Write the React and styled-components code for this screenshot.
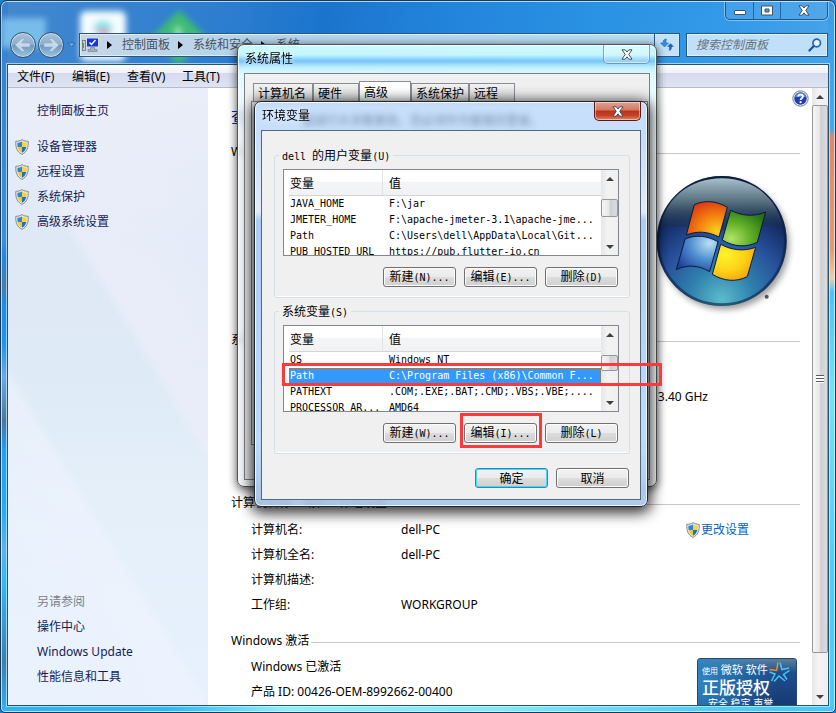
import React from "react";
import styled, { createGlobalStyle, css } from "styled-components";

const Global = createGlobalStyle`
  *, *::before, *::after { box-sizing: border-box; }
  html, body { margin: 0; }
  body {
    font: 12px/18px "Noto Sans", "Noto Sans CJK SC", sans-serif;
    color: #000;
    background: #1d7fd6;
  }
  button, input { font: inherit; color: inherit; }
  h1, h2, ul, dl, dd, dt { margin: 0; padding: 0; font: inherit; list-style: none; }
`;

/* ---------- main window ---------- */

const Desktop = styled.div`
  position: relative;
  height: 100vh;
  overflow: hidden;
`;

const Window = styled.div`
  position: relative;
  display: flex;
  flex-direction: column;
  height: 100%;
  padding: 0 7px 7px;
  border: 1px solid #16395c;
  border-radius: 7px 7px 5px 5px;
  box-shadow: inset 0 0 0 1px rgba(225, 245, 255, 0.75);
  overflow: hidden;
  background:
    linear-gradient(90deg, #2fb2f8, #2db8fb 20%, #8af0fc 34%, #7ee9fb 60%, #50cdfb 85%, #46c8fa) bottom / 100% 7px no-repeat,
    linear-gradient(180deg, #3b9de6 0, #4aa6ea 18%, #e0866c 19%, #e39a78 35%, #f0cfa0 39%, #4cc4fb 41%, #6fe4fb 55%, #50cdfb 80%, #4ccbfa) right / 7px 100% no-repeat,
    linear-gradient(180deg, #3b7fcb 0, #3a8edb 34%, #1f86e6 36%, #4a7da8 40%, #1b8df0 43%, #1b94f2 48%, #6fa8e6 53%, #4a7898 59%, #1e9ff8 63%, #22aefb 72%, #5ab4f0 77%, #2fb8fb 82%, #3f7fa8 93%, #2fb2f8) left / 7px 100% no-repeat,
    linear-gradient(100deg, #4388cd 0, #2f7fd0 22%, #1b74cc 34%, #2283db 46%, #2a92e2 62%, #3399e8 76%, #46a4e8 88%, #58aee9 100%);
`;

const Wallpaper = styled.svg`
  position: absolute;
  left: 0;
  top: 0;
  filter: blur(3px);
`;

const CaptionBar = styled.header`
  position: relative;
  display: flex;
  justify-content: flex-end;
  height: 32px;
  padding-top: 1px;
`;

const CaptionGroup = styled.div`
  display: flex;
  height: 18px;
  border: 1px solid rgba(16, 62, 110, 0.75);
  border-top: 0;
  border-radius: 0 0 5px 5px;
  box-shadow: 0 0 0 1px rgba(190, 225, 255, 0.55);
  background: rgba(110, 180, 240, 0.3);
`;

const CaptionButton = styled.button`
  display: grid;
  place-items: center;
  width: ${(p) => (p.$wide ? 47 : 27)}px;
  padding: 0;
  border: 0;
  border-left: ${(p) => (p.$first ? 0 : "1px solid rgba(16, 62, 110, 0.6)")};
  background: none;
`;

const AddressRow = styled.div`
  position: relative;
  display: flex;
  align-items: center;
  height: 24px;
  margin-bottom: 7px;
`;

const NavButtons = styled.nav`
  display: flex;
  align-items: center;
  gap: 2px;
  flex: none;
  padding-left: 2px;
  width: 71px;
`;

const RoundButton = styled.button`
  display: grid;
  place-items: center;
  flex: none;
  width: 26px;
  height: 26px;
  padding: 0;
  border: 1px solid #2d5278;
  border-radius: 50%;
  box-shadow: inset 0 0 0 1px rgba(255, 255, 255, 0.55);
  background: linear-gradient(#a9c2d8 0, #8eaecb 48%, #6d98bf 52%, #9dc4de 100%);
`;

const HistoryButton = styled.button`
  padding: 0 0 0 1px;
  border: 0;
  background: none;
  line-height: 0;
`;

const AddressBox = styled.div`
  display: flex;
  align-items: center;
  flex: 1;
  height: 24px;
  border: 1px solid #2b567f;
  box-shadow: inset 0 0 0 1px rgba(235, 248, 255, 0.7);
  background: linear-gradient(90deg, #c5d7e8, #b5d3ea 30%, #b8def3);
`;

const Crumbs = styled.ol`
  display: flex;
  align-items: center;
  flex: 1;
  margin: 0;
  padding: 0 2px;
  list-style: none;
  color: #46525e;
`;

const Crumb = styled.li`
  display: flex;
  align-items: center;
  &::before {
    content: "";
    margin: 0 10px 0 8px;
    border: 4px solid transparent;
    border-left: 5px solid #000;
    border-right: 0;
  }
`;

const CrumbLink = styled.a`
  color: inherit;
  text-decoration: none;
`;

const RefreshButton = styled.button`
  display: grid;
  place-items: center;
  width: 25px;
  height: 22px;
  padding: 0;
  border: 0;
  border-left: 1px solid #2b567f;
  background: rgba(200, 228, 250, 0.6);
`;

const SearchBox = styled.label`
  display: flex;
  align-items: center;
  width: 142px;
  height: 24px;
  margin-left: 6px;
  padding: 0 5px 0 9px;
  border: 1px solid #2b567f;
  box-shadow: inset 0 0 0 1px rgba(235, 248, 255, 0.7);
  background: #bfe0f8;
`;

const SearchInput = styled.input`
  flex: 1;
  min-width: 0;
  padding: 0;
  border: 0;
  outline: 0;
  background: none;
  font-style: italic;
  &::placeholder { color: #66727c; opacity: 1; }
`;

const Client = styled.div`
  position: relative;
  display: flex;
  flex-direction: column;
  flex: 1;
  min-height: 0;
  margin: 0 -1px -1px;
  border: 1px solid #27536f;
  box-shadow: 0 0 0 1px rgba(215, 243, 255, 0.65);
  background: #fff;
`;

const MenuBar = styled.nav`
  display: flex;
  align-items: center;
  height: 23px;
  padding: 2px 0 0 9px;
  border-bottom: 1px solid #b4bcd0;
  background: linear-gradient(#fdfdff 0, #eff2fa 35%, #d5dbee 38%, #dfe4f2 100%);
`;

const MenuItem = styled.button`
  width: 55px;
  padding: 0;
  border: 0;
  background: none;
  text-align: left;
  white-space: nowrap;
`;

const Columns = styled.div`
  display: flex;
  flex: 1;
  min-height: 0;
`;

const Sidebar = styled.aside`
  display: flex;
  flex-direction: column;
  flex: none;
  width: 200px;
  padding: 10px 0 16px 7px;
  background:
    linear-gradient(59deg, rgba(240, 244, 254, 0.2) 0, rgba(240, 244, 254, 0.55) 34%, transparent 36%, transparent 60%, rgba(236, 238, 250, 0.7) 62%, rgba(236, 238, 250, 0.2) 100%),
    linear-gradient(180deg, #e9eff8 0, #dfe9f6 24%, #deeaf5 45%, #e5f0fb 72%, #e7f1fd 100%);
`;

const SideLink = styled.a`
  display: flex;
  align-items: center;
  height: 25px;
  padding-left: ${(p) => (p.$icon ? 0 : 22)}px;
  gap: 8px;
  color: #151c55;
  text-decoration: none;
`;

const TaskList = styled.div`
  margin-top: 11px;
`;

const SeeAlso = styled.div`
  margin-top: auto;
`;

const SeeAlsoTitle = styled.div`
  height: 25px;
  padding-left: 22px;
  line-height: 25px;
  color: #7b8087;
`;

const Main = styled.main`
  position: relative;
  flex: 1;
  min-width: 0;
  padding: 17px 12px 0 23px;
  overflow: hidden;
  line-height: 25px;
`;

const PageTitle = styled.h1`
  height: 25px;
  margin-bottom: 9px;
  font-size: 16px;
  color: #003399;
`;

const HelpButton = styled.button`
  position: absolute;
  top: 2px;
  right: 3px;
  padding: 0;
  border: 0;
  background: none;
  line-height: 0;
`;

const SectionTitle = styled.h2`
  display: flex;
  align-items: center;
  gap: 2px;
  height: 25px;
  white-space: nowrap;
  &::after {
    content: "";
    flex: 1;
    height: 1px;
    margin-top: 4px;
    background: #c6c6c6;
  }
`;

const EditionBlock = styled.div`
  display: flex;
  justify-content: flex-end;
  height: 163px;
  padding: 11px 13px 0 0;
`;

const SystemBlock = styled.dl`
  height: 138px;
  padding: 32px 0 0 20px;
`;

const NameBlock = styled.dl`
  padding: 2px 0 11px 20px;
`;

const Fact = styled.div`
  display: flex;
  height: 25px;
`;

const FactLabel = styled.dt`
  width: 150px;
`;

const FactValue = styled.dd`
  width: ${(p) => (p.$wide ? "307px" : "auto")};
  text-align: ${(p) => (p.$wide ? "right" : "left")};
`;

const ChangeLink = styled.a`
  display: flex;
  align-items: center;
  gap: 1px;
  margin: 0 51px 0 auto;
  color: #0066cc;
  text-decoration: none;
`;

const Activation = styled.div`
  display: flex;
  justify-content: space-between;
  padding: 1px 3px 0 20px;
`;

const Genuine = styled.div`
  display: grid;
  grid-template-columns: 1fr 26px;
  grid-template-rows: 18px 17px 14px;
  flex: none;
  width: 100px;
  height: 56px;
  margin-top: 4px;
  padding: 2px 3px 0 4px;
  border: 1px solid #27496e;
  border-radius: 3px 3px 0 0;
  color: #fff;
  font-size: 11px;
  line-height: 18px;
  white-space: nowrap;
  background:
    radial-gradient(circle at 0 40%, #2f86c4 0, rgba(30, 90, 160, 0) 75%),
    linear-gradient(180deg, #5c7f9f 0, #1d4f8c 25%, #14366f 100%);
`;

const GenuineSmall = styled.small`
  font-size: 8px;
`;

const GenuineBig = styled.strong`
  grid-column: 1 / 3;
  font-size: 17px;
  font-weight: 500;
  line-height: 17px;
`;

const GenuineFoot = styled.span`
  grid-column: 1 / 3;
  padding-left: 6px;
  font-size: 10px;
  line-height: 14px;
`;

/* ---------- scrollbar ---------- */

const Bar = styled.div`
  display: flex;
  flex-direction: column;
  flex: none;
  width: ${(p) => p.$width}px;
  background: linear-gradient(90deg, #e6e6e6, #f3f3f3 40%, #efefef);
`;

const BarButton = styled.button`
  display: grid;
  place-items: center;
  height: 17px;
  padding: 0;
  border: 0;
  background: none;
  &::before {
    content: "";
    border: 4px solid transparent;
    ${(p) =>
      p.$down
        ? css`border-top-color: #404040; border-bottom: 0;`
        : css`border-bottom-color: #404040; border-top: 0;`}
  }
`;

const BarSpace = styled.div`
  flex: ${(p) => p.$grow};
`;

const BarThumb = styled.div`
  display: grid;
  place-items: center;
  flex: ${(p) => p.$grow};
  border: 1px solid #979797;
  border-radius: 2px;
  background: linear-gradient(90deg, #f6f6f6, #e8e8ea 45%, #cfd0d4 55%, #dcdce0);
`;

const Grip = styled.div`
  width: 8px;
  height: 8px;
  background: repeating-linear-gradient(#5b5b5b 0 1px, #fff 1px 3px);
`;

function ScrollBar({ width, before, thumb, after, grip }) {
  return (
    <Bar $width={width}>
      <BarButton aria-label="向上滚动" />
      <BarSpace $grow={before} />
      <BarThumb $grow={thumb}>{grip && <Grip />}</BarThumb>
      <BarSpace $grow={after} />
      <BarButton $down aria-label="向下滚动" />
    </Bar>
  );
}

/* ---------- dialogs ---------- */

const DialogFrame = styled.section`
  position: absolute;
  display: flex;
  flex-direction: column;
  padding: 0 6px 6px;
  border-radius: 7px;
  font-family: "Noto Sans CJK SC", sans-serif;
`;

const PropertiesDialog = styled(DialogFrame)`
  left: 237px;
  top: 44px;
  width: 420px;
  height: 443px;
  border: 1px solid #4c5457;
  box-shadow: inset 0 0 0 1px rgba(255, 255, 255, 0.8), 0 2px 9px 1px rgba(0, 0, 0, 0.6);
  backdrop-filter: blur(4px);
  background: linear-gradient(180deg, rgba(205, 252, 250, 0.94) 0, rgba(200, 250, 255, 0.92) 10px, rgba(120, 200, 255, 0.9) 16px, rgba(190, 240, 255, 0.9) 22px, rgba(225, 253, 255, 0.88) 30px, rgba(242, 250, 255, 0.82) 80px, rgba(246, 249, 252, 0.82) 100%);
`;

const VariablesDialog = styled(DialogFrame)`
  left: 254px;
  top: 101px;
  width: 394px;
  border: 1px solid #1d2530;
  box-shadow: inset 0 0 0 1px rgba(255, 255, 255, 0.8), 0 3px 14px 3px rgba(0, 0, 0, 0.8);
  backdrop-filter: blur(3px);
  background: linear-gradient(180deg, rgba(170, 206, 250, 0.66) 0, rgba(170, 206, 250, 0.66) 40px, rgba(220, 234, 250, 0.9) 110px, rgba(165, 200, 240, 0.92) 118px, rgba(180, 217, 252, 0.92) 340px, rgba(165, 195, 230, 0.9) 100%);
`;

const DialogTitle = styled.div`
  display: flex;
  justify-content: space-between;
  flex: none;
  height: 28px;
  padding-left: 1px;
  line-height: 26px;
  text-shadow: 0 0 6px #fff;
`;

const CloseButton = styled.button`
  display: grid;
  place-items: center;
  width: 47px;
  height: 19px;
  padding: 0;
  border: 1px solid ${(p) => (p.$active ? "#5a1a14" : "rgba(70, 110, 130, 0.6)")};
  border-top: 0;
  border-radius: 0 0 5px 5px;
  box-shadow: inset 0 0 0 1px rgba(255, 255, 255, 0.45);
  background: ${(p) =>
    p.$active
      ? "linear-gradient(#e0a293 0, #d3765f 45%, #bb3119 50%, #c4422a 75%, #dd8c62 100%)"
      : "rgba(255, 255, 255, 0.2)"};
`;

const DialogBody = styled.div`
  flex: 1;
  min-height: 0;
  border: 1px solid ${(p) => (p.$active ? "#55667f" : "#7b8084")};
  background: #f0f0f0;
`;

const PropertiesBody = styled(DialogBody)`
  display: flex;
  flex-direction: column;
  padding: 7px 1px 34px 6px;
`;

const Tabs = styled.div`
  display: flex;
  align-items: flex-end;
  height: 20px;
  padding-left: 2px;
`;

const Tab = styled.button`
  width: ${(p) => p.$width}px;
  height: ${(p) => (p.$selected ? 20 : 18)}px;
  padding: 0 0 0 4px;
  border: 1px solid #898c95;
  border-bottom: 0;
  background: ${(p) => (p.$selected ? "#fff" : "linear-gradient(#f2f2f2, #dddddd)")};
  text-align: left;
  line-height: 15px;
  white-space: nowrap;
`;

const TabPage = styled.div`
  flex: 1;
  padding: 9px 50px;
  border: 1px solid #898c95;
  background: #fff;
`;

const VariablesBody = styled(DialogBody)`
  display: flex;
  flex-direction: column;
  gap: 4px;
  padding: 15px 10px 11px 12px;
`;

const Mono = styled.span`
  font-family: "DejaVu Sans Mono", monospace;
  font-size: 10px;
`;

const Group = styled.fieldset`
  min-width: 0;
  margin: 0;
  padding: 5px 10px 10px 4px;
  border: 1px solid #d5dfe5;
  border-radius: 3px;
  box-shadow: inset 0 -1px 0 #fff;
`;

const Legend = styled.legend`
  height: 18px;
  padding: 0 3px;
  line-height: 17px;
`;

const ListView = styled.div`
  display: flex;
  height: 87px;
  margin-left: 4px;
  border: 1px solid #828790;
  background: #fff;
`;

const ListPort = styled.div`
  flex: 1;
  min-width: 0;
  padding-left: 5px;
  overflow: hidden;
`;

const Table = styled.table`
  width: 100%;
  table-layout: fixed;
  border-collapse: collapse;
`;

const HeadCell = styled.th`
  width: ${(p) => p.$width};
  height: 25px;
  padding: 1px 0 0 1px;
  border-bottom: 1px solid #d5d5d5;
  font-weight: 400;
  line-height: 21px;
  text-align: left;
  background:
    linear-gradient(#e0e3e8, #e0e3e8) right 5px top / ${(p) => (p.$width ? 1 : 0)}px 100% no-repeat,
    linear-gradient(#fff 0, #fff 45%, #f4f5f7 50%, #f1f2f4 100%);
`;

const Row = styled.tr`
  ${(p) =>
    p.$selected &&
    css`
      color: #fff;
      background: #3399ff;
      outline: 1px dotted #c86b16;
      outline-offset: -1px;
    `}
`;

const Cell = styled.td`
  height: 16px;
  padding: 0 0 0 1px;
  font: 10px/16px "DejaVu Sans Mono", monospace;
  white-space: nowrap;
  overflow: hidden;
`;

const Actions = styled.div`
  display: flex;
  justify-content: flex-end;
  gap: 8px;
  margin: ${(p) => p.$top}px 1px 0 0;
`;

const PushButton = styled.button`
  width: 73px;
  height: 20px;
  padding: 0;
  border: 1px solid ${(p) => (p.$default ? "#2c8ab5" : "#707070")};
  border-radius: 3px;
  box-shadow: ${(p) => (p.$default ? "inset 0 0 0 1px #48d4fb" : "inset 0 0 0 1px #fcfcfc")};
  background: linear-gradient(#f2f2f2 0, #ebebeb 48%, #dddddd 50%, #cfcfcf 100%);
  line-height: 16px;
  white-space: nowrap;
`;

const Mark = styled.div`
  position: absolute;
  left: ${(p) => p.$x}px;
  top: ${(p) => p.$y}px;
  width: ${(p) => p.$w}px;
  height: ${(p) => p.$h}px;
  border: 3px solid #fb3a3a;
  pointer-events: none;
`;

/* ---------- icons ---------- */

const Shield = () => (
  <svg width="14" height="16" viewBox="0 0 14 16" aria-hidden="true">
    <path d="M7 .6C5.200 1.900 3 2.300.8 2.300.4 8.500 2 13 7 15.400 12 13 13.600 8.500 13.200 2.300 11 2.300 8.800 1.900 7 .6Z" fill="#e4e6e8" stroke="#858b92" />
    <path d="M7 2.400C5.600 3.300 4.100 3.700 2.400 3.800c0 1.500 0 2.900.3 4.200H7Z" fill="#2a86d8" />
    <path d="M7 2.400c1.400.9 2.900 1.300 4.600 1.400 0 1.500 0 2.900-.3 4.200H7Z" fill="#fbd431" />
    <path d="M7 8H2.700c.6 2.600 1.900 4.500 4.300 5.800Z" fill="#f9c81e" />
    <path d="M7 8h4.300c-.6 2.600-1.900 4.500-4.300 5.800Z" fill="#1c6fca" />
  </svg>
);

const CrossGlyph = () => (
  <svg width="12" height="11" viewBox="0 0 12 11" aria-hidden="true">
    <path d="M1 .8h3.200L6 3 7.800.8H11L7.800 5.400 11 10.200H7.800L6 7.800 4.200 10.200H1L4.200 5.400Z" fill="#fff" stroke="#45505d" strokeLinejoin="round" />
  </svg>
);

const MinGlyph = () => (
  <svg width="12" height="11" viewBox="0 0 12 11" aria-hidden="true">
    <rect x=".5" y="5.500" width="11" height="4" rx=".5" fill="#fff" stroke="#45505d" />
  </svg>
);

const MaxGlyph = () => (
  <svg width="12" height="11" viewBox="0 0 12 11" aria-hidden="true">
    <path fillRule="evenodd" d="M.5 1h11v9H.5Zm3.500 3v3h4V4Z" fill="#fff" stroke="#45505d" />
  </svg>
);

const Arrow = ({ back }) => (
  <svg width="18" height="16" viewBox="0 0 18 16" aria-hidden="true">
    <path
      d={back ? "M1 8 8 1.500h3L7.500 6H16v4H7.500L11 14.500H8Z" : "M17 8 10 1.500H7L10.500 6H2v4h8.500L7 14.500h3Z"}
      fill="#d4e3f0"
      fillOpacity=".85"
      stroke="#8aa9c6"
      strokeWidth=".6"
    />
  </svg>
);

const Monitor = () => (
  <svg width="17" height="16" viewBox="0 0 17 16" aria-hidden="true">
    <rect x=".5" y="3.500" width="3" height="10" fill="#c8cec8" stroke="#6c746c" strokeWidth=".8" />
    <path d="M1.500 6v5" stroke="#33b533" />
    <rect x="4.500" y="1" width="12" height="9" fill="#1735d8" stroke="#d8dce4" />
    <path d="m7.500 5.500 2 2L13.500 3" fill="none" stroke="#fff" strokeWidth="1.500" />
    <path d="M8.500 10.500h4v2h2.500v2H6v-2h2.500Z" fill="#a9aeb6" stroke="#737a84" strokeWidth=".6" />
  </svg>
);

const RefreshGlyph = () => (
  <svg width="15" height="14" viewBox="0 0 15 14" aria-hidden="true">
    <path d="M6.500 1C4 1 3 2.500 3 5H.5l4 4 4-4H6c0-1.500 0-2.500.5-4Z" fill="#2f8fe0" stroke="#1b62b4" strokeWidth=".5" />
    <path d="M8.500 13C11 13 12 11.500 12 9h2.500l-4-4-4 4H9c0 1.500 0 2.500-.5 4Z" fill="#2360b8" stroke="#e8f4ff" strokeWidth=".4" />
  </svg>
);

const Magnifier = () => (
  <svg width="14" height="14" viewBox="0 0 14 14" aria-hidden="true">
    <circle cx="8.700" cy="5" r="3.800" fill="#e4f4ff" stroke="#2766b6" strokeWidth="1.700" />
    <path d="M5.800 8 1.500 12.500" stroke="#2456a2" strokeWidth="2.400" strokeLinecap="round" />
  </svg>
);

const HelpGlyph = () => (
  <svg width="17" height="17" viewBox="0 0 17 17" aria-hidden="true">
    <circle cx="8.500" cy="8.500" r="7.700" fill="#eceef0" stroke="#777d84" />
    <circle cx="8.500" cy="8.500" r="6.200" fill="#1f3fb4" />
    <path d="M3 7a5.700 5.700 0 0 1 11 0Z" fill="#5e86dc" />
    <path d="M6.200 6.600C6.200 3.800 11 3.900 10.900 6.500 10.900 8.200 8.600 8.300 8.600 10" fill="none" stroke="#fff" strokeWidth="1.800" />
    <circle cx="8.600" cy="12.200" r="1.100" fill="#fff" />
  </svg>
);

const StarGlyph = () => (
  <svg width="24" height="22" viewBox="0 0 24 22" aria-hidden="true">
    <g fill="none" strokeWidth="1.500">
      <path d="M1.500 8.500 8.500 9.500 10 1.500" stroke="#f08a24" />
      <path d="M12 1.500 14 8.500 21 7M1.500 11 7 13 3.500 20M6 20.500 11 15l6 5M21.500 9.500 15.500 13.500 19 18.500" stroke="#4bc3f2" />
    </g>
  </svg>
);

const WindowsOrb = () => (
  <svg width="131" height="132" viewBox="48 44 393 396" overflow="visible" aria-label="Windows">
    <defs>
      <radialGradient id="orb" cx=".5" cy=".95" r=".9">
        <stop offset="0" stopColor="#5bbccb" />
        <stop offset=".28" stopColor="#2f7fae" />
        <stop offset=".55" stopColor="#27509a" />
        <stop offset=".8" stopColor="#132a62" />
        <stop offset="1" stopColor="#0a1c42" />
      </radialGradient>
      <linearGradient id="gloss" x1="0" y1="0" x2="0" y2="1">
        <stop offset="0" stopColor="#a7bfc9" />
        <stop offset=".5" stopColor="#4c6676" />
        <stop offset="1" stopColor="#10233f" stopOpacity=".3" />
      </linearGradient>
      <radialGradient id="fr" cx=".75" cy=".85" r=".9">
        <stop offset="0" stopColor="#f9d21c" />
        <stop offset=".45" stopColor="#f58a12" />
        <stop offset="1" stopColor="#dc3b10" />
      </radialGradient>
      <radialGradient id="fg" cx=".2" cy=".8" r=".95">
        <stop offset="0" stopColor="#b2e468" />
        <stop offset=".5" stopColor="#5fae25" />
        <stop offset="1" stopColor="#256d18" />
      </radialGradient>
      <radialGradient id="fb" cx=".8" cy=".2" r=".95">
        <stop offset="0" stopColor="#b9e2f2" />
        <stop offset=".5" stopColor="#4f8fd0" />
        <stop offset="1" stopColor="#1e3f9a" />
      </radialGradient>
      <radialGradient id="fy" cx=".3" cy=".3" r=".9">
        <stop offset="0" stopColor="#fdf32a" />
        <stop offset=".5" stopColor="#fbd315" />
        <stop offset="1" stopColor="#ee8f10" />
      </radialGradient>
      <filter id="soft" x="-20%" y="-20%" width="140%" height="140%">
        <feGaussianBlur stdDeviation="9" />
      </filter>
    </defs>
    <circle cx="254" cy="254" r="194" fill="#000" opacity=".38" filter="url(#soft)" />
    <circle cx="245" cy="242" r="195" fill="url(#orb)" />
    <circle cx="245" cy="242" r="191" fill="none" stroke="#0b1e40" strokeWidth="8" opacity=".6" />
    <path d="M61 204C75 112 152 54 245 54s170 58 184 150c-50-22-90 6-180 6S110 188 61 204Z" fill="url(#gloss)" />
    <g stroke="#0a1a3a" strokeWidth="3">
      <path d="M163 133c32-14 66-12 99 8l-25 89c-33-17-66-19-98-6Z" fill="url(#fr)" />
      <path d="M272 150c34 17 68 20 105 5l-25 91c-34 16-70 14-105-7Z" fill="url(#fg)" />
      <path d="M135 236c32-14 66-10 99 8l-25 90c-34-20-66-22-100-6Z" fill="url(#fb)" />
      <path d="M242 252c34 18 68 22 105 9l-25 88c-34 17-70 14-105-7Z" fill="url(#fy)" />
    </g>
    <circle cx="380" cy="409" r="6" fill="#555" />
  </svg>
);

/* ---------- data ---------- */

const tasks = ["设备管理器", "远程设置", "系统保护", "高级系统设置"];
const seeAlso = ["操作中心", "Windows Update", "性能信息和工具"];
const names = [
  ["计算机名:", "dell-PC"],
  ["计算机全名:", "dell-PC"],
  ["计算机描述:", ""],
  ["工作组:", "WORKGROUP"],
];
const tabs = [
  ["计算机名", 60],
  ["硬件", 46],
  ["高级", 52],
  ["系统保护", 58],
  ["远程", 46],
];
const userVars = [
  ["JAVA_HOME", "F:\\jar"],
  ["JMETER_HOME", "F:\\apache-jmeter-3.1\\apache-jme..."],
  ["Path", "C:\\Users\\dell\\AppData\\Local\\Git..."],
  ["PUB_HOSTED_URL", "https://pub.flutter-io.cn"],
];
const systemVars = [
  ["OS", "Windows_NT"],
  ["Path", "C:\\Program Files (x86)\\Common F..."],
  ["PATHEXT", ".COM;.EXE;.BAT;.CMD;.VBS;.VBE;...."],
  ["PROCESSOR_AR...", "AMD64"],
];

function VariableGroup({ legend, rows, selected, scroll, keys }) {
  return (
    <Group>
      <Legend>{legend}</Legend>
      <ListView>
        <ListPort>
          <Table>
            <thead>
              <tr>
                <HeadCell $width="99px">变量</HeadCell>
                <HeadCell>值</HeadCell>
              </tr>
            </thead>
            <tbody>
              {rows.map(([name, value]) => (
                <Row key={name} $selected={name === selected}>
                  <Cell>{name}</Cell>
                  <Cell>{value}</Cell>
                </Row>
              ))}
            </tbody>
          </Table>
        </ListPort>
        <ScrollBar width={17} before={scroll[0]} thumb={scroll[1]} after={scroll[2]} />
      </ListView>
      <Actions $top={11}>
        <PushButton>新建<Mono>({keys[0]})...</Mono></PushButton>
        <PushButton>编辑<Mono>({keys[1]})...</Mono></PushButton>
        <PushButton>删除<Mono>({keys[2]})</Mono></PushButton>
      </Actions>
    </Group>
  );
}

export default function App() {
  return (
    <Desktop>
      <Global />
      <Window>
        <Wallpaper width="240" height="64" aria-hidden="true">
          <rect x="0" y="17" width="45" height="30" fill="#77bdea" />
          <rect x="79" y="10" width="46" height="50" rx="6" fill="#f4fcff" />
          <path d="M92 29c2-12 18-12 20 0Z" fill="#8fdcea" />
          <path d="M93 30h17l-6 5Z" fill="#e0627a" />
          <path d="M178 9 206 37 178 64 150 37Z" fill="#3fbb74" />
          <rect x="174" y="26" width="6" height="14" fill="#a5e8bb" />
        </Wallpaper>
        <CaptionBar>
          <CaptionGroup>
            <CaptionButton $first aria-label="最小化"><MinGlyph /></CaptionButton>
            <CaptionButton aria-label="最大化"><MaxGlyph /></CaptionButton>
            <CaptionButton $wide aria-label="关闭"><CrossGlyph /></CaptionButton>
          </CaptionGroup>
        </CaptionBar>
        <AddressRow>
          <NavButtons>
            <RoundButton aria-label="后退"><Arrow back /></RoundButton>
            <RoundButton aria-label="前进"><Arrow /></RoundButton>
            <HistoryButton aria-label="最近的页面">
              <svg width="9" height="6" aria-hidden="true"><path d="M1 1h7L4.500 5Z" fill="#6fb0ea" stroke="#1d5c9c" strokeWidth=".7" /></svg>
            </HistoryButton>
          </NavButtons>
          <AddressBox>
            <Crumbs>
              <Monitor />
              <Crumb><CrumbLink href="#panel">控制面板</CrumbLink></Crumb>
              <Crumb><CrumbLink href="#security">系统和安全</CrumbLink></Crumb>
              <Crumb><CrumbLink href="#system">系统</CrumbLink></Crumb>
            </Crumbs>
            <RefreshButton aria-label="刷新"><RefreshGlyph /></RefreshButton>
          </AddressBox>
          <SearchBox>
            <SearchInput type="text" placeholder="搜索控制面板" aria-label="搜索控制面板" />
            <Magnifier />
          </SearchBox>
        </AddressRow>
        <Client>
          <MenuBar>
            {["文件(F)", "编辑(E)", "查看(V)", "工具(T)"].map((m) => (
              <MenuItem key={m}>{m}</MenuItem>
            ))}
          </MenuBar>
          <Columns>
            <Sidebar>
              <SideLink href="#home">控制面板主页</SideLink>
              <TaskList>
                {tasks.map((t) => (
                  <SideLink key={t} href="#task" $icon><Shield />{t}</SideLink>
                ))}
              </TaskList>
              <SeeAlso>
                <SeeAlsoTitle>另请参阅</SeeAlsoTitle>
                {seeAlso.map((t) => (
                  <SideLink key={t} href="#see">{t}</SideLink>
                ))}
              </SeeAlso>
            </Sidebar>
            <Main>
              <HelpButton aria-label="帮助"><HelpGlyph /></HelpButton>
              <PageTitle>查看有关计算机的基本信息</PageTitle>
              <SectionTitle>Windows 版本</SectionTitle>
              <EditionBlock><WindowsOrb /></EditionBlock>
              <SectionTitle>系统</SectionTitle>
              <SystemBlock>
                <Fact>
                  <FactLabel>处理器:</FactLabel>
                  <FactValue $wide>3.40 GHz</FactValue>
                </Fact>
              </SystemBlock>
              <SectionTitle>计算机名称、域和工作组设置</SectionTitle>
              <NameBlock>
                {names.map(([label, value], i) => (
                  <Fact key={label}>
                    <FactLabel>{label}</FactLabel>
                    <FactValue>{value}</FactValue>
                    {i === 0 && <ChangeLink href="#change"><Shield />更改设置</ChangeLink>}
                  </Fact>
                ))}
              </NameBlock>
              <SectionTitle>Windows 激活</SectionTitle>
              <Activation>
                <div>
                  <div>Windows 已激活</div>
                  <div>产品 ID: 00426-OEM-8992662-00400</div>
                </div>
                <Genuine>
                  <span><GenuineSmall>使用</GenuineSmall> 微软 软件</span>
                  <StarGlyph />
                  <GenuineBig>正版授权</GenuineBig>
                  <GenuineFoot>安全 稳定 声誉</GenuineFoot>
                </Genuine>
              </Activation>
            </Main>
            <ScrollBar width={16} before={0} thumb={548} after={35} grip />
          </Columns>
        </Client>
      </Window>

      <PropertiesDialog aria-label="系统属性">
        <DialogTitle>
          系统属性
          <CloseButton aria-label="关闭"><CrossGlyph /></CloseButton>
        </DialogTitle>
        <PropertiesBody>
          <Tabs role="tablist">
            {tabs.map(([label, width]) => (
              <Tab key={label} role="tab" $width={width} $selected={label === "高级"}>{label}</Tab>
            ))}
          </Tabs>
          <TabPage>要进行大多数更改，您必须作为管理员登录。</TabPage>
        </PropertiesBody>
      </PropertiesDialog>

      <VariablesDialog aria-label="环境变量">
        <DialogTitle>
          环境变量
          <CloseButton $active aria-label="关闭"><CrossGlyph /></CloseButton>
        </DialogTitle>
        <VariablesBody $active>
          <VariableGroup
            legend={<><Mono>dell </Mono>的用户变量<Mono>(U)</Mono></>}
            rows={userVars}
            scroll={[13, 16, 22]}
            keys={["N", "E", "D"]}
          />
          <VariableGroup
            legend={<>系统变量<Mono>(S)</Mono></>}
            rows={systemVars}
            selected="Path"
            scroll={[12, 15, 24]}
            keys={["W", "I", "L"]}
          />
          <Actions $top={10}>
            <PushButton $default>确定</PushButton>
            <PushButton>取消</PushButton>
          </Actions>
        </VariablesBody>
      </VariablesDialog>

      <Mark $x={282} $y={363} $w={380} $h={23} />
      <Mark $x={460} $y={413} $w={82} $h={35} />
    </Desktop>
  );
}
